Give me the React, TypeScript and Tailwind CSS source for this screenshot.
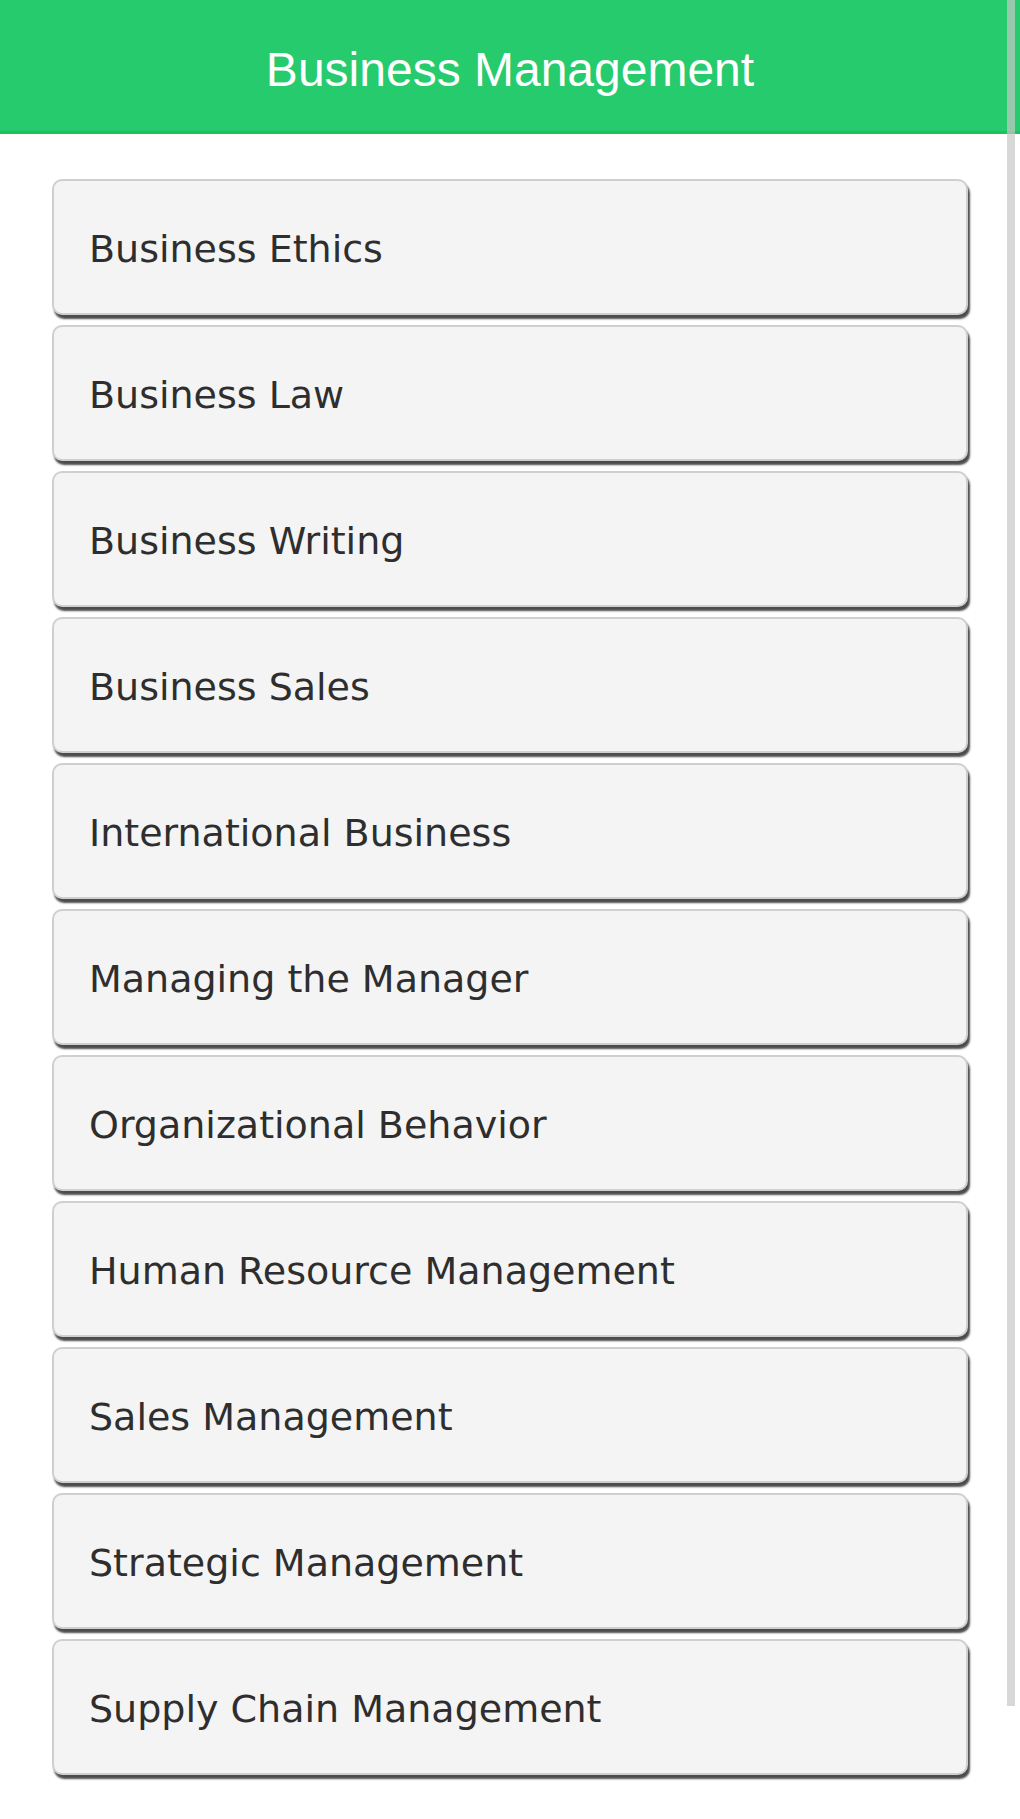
const topics = [
  'Business Ethics',
  'Business Law',
  'Business Writing',
  'Business Sales',
  'International Business',
  'Managing the Manager',
  'Organizational Behavior',
  'Human Resource Management',
  'Sales Management',
  'Strategic Management',
  'Supply Chain Management',
]

export default function App() {
  return (
    <div className="relative min-h-[1819px] bg-white" style={{ fontFamily: '"DejaVu Sans", Verdana, sans-serif' }}>
      <header className="h-[134px] bg-[#26cb6d] border-b-[3px] border-[#1fbe5f] flex items-center justify-center">
        <h1 className="text-[48px] text-white leading-none pt-2" style={{ fontFamily: '"Liberation Sans", Arial, sans-serif' }}>
          Business Management
        </h1>
      </header>

      <main className="px-[52px] pt-[45px] pb-10 flex flex-col gap-[10px]">
        {topics.map((t) => (
          <button
            key={t}
            className="h-[136px] w-full text-left pl-[35px] pt-1 bg-[#f4f4f4] border-2 border-[#cfcfcf] rounded-[10px] shadow-[2px_4px_2px_rgba(0,0,0,0.7)] text-[38px] text-[#2e2e2e]"
          >
            {t}
          </button>
        ))}
      </main>

      <div className="absolute top-0 left-[1007px] w-[8px] h-[1706px] bg-[rgba(200,200,200,0.7)]" />
    </div>
  )
}
